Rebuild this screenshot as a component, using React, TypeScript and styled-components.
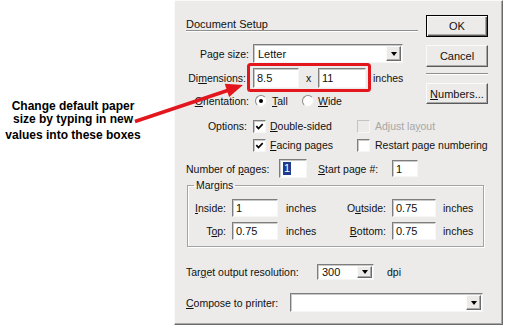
import React from "react";
import styled, { createGlobalStyle } from "styled-components";

const Global = createGlobalStyle`
  html, body { margin: 0; padding: 0; background: #fff; }
  body { font-family: "Liberation Sans", Arial, sans-serif; }
`;

const DLG = "#ecebe9";

const Page = styled.div`
  position: relative;
  width: 512px;
  height: 328px;
  display: flex;
  overflow: hidden;
  background: #fff;
`;

const Note = styled.div`
  width: 174px;
  flex-shrink: 0;
  box-sizing: border-box;
  padding: 100px 28px 0 0;
  font: bold 12px "Liberation Sans", Arial, sans-serif;
  color: #000;
  text-align: center;
`;

const NoteLine = styled.div<{ $gap?: number }>`
  line-height: 13px;
  margin-top: ${(p) => p.$gap ?? 0}px;
  white-space: nowrap;
`;

const Overlay = styled.svg`
  position: absolute;
  left: 0;
  top: 0;
  width: 512px;
  height: 328px;
  pointer-events: none;
`;

const Dialog = styled.div`
  width: 329px;
  height: 325px;
  box-sizing: border-box;
  background: ${DLG};
  border-top: 1px solid #fafafa;
  border-left: 1px solid #fafafa;
  border-right: 1px solid #6b6b6b;
  border-bottom: 1px solid #6b6b6b;
  box-shadow: inset -1px -1px 0 #a9a9a9;
  padding: 0 14px 0 11px;
  display: flex;
  flex-direction: column;
  font-size: 10.5px;
  color: #111;
  font-family: "Liberation Sans", Arial, sans-serif;
`;

const TopSection = styled.div`
  display: flex;
  justify-content: space-between;
`;

const TopLeft = styled.div`
  width: 232px;
  display: flex;
  flex-direction: column;
`;

const Header = styled.div`
  padding-top: 17px;
  line-height: 12px;
  font-size: 11px;
`;

const Groove = styled.div`
  margin-top: 0;
  height: 0;
  border-top: 1px solid #8e8e8e;
  border-bottom: 1px solid #fff;
`;

const Row = styled.div<{ $mt: number; $h: number }>`
  display: flex;
  align-items: center;
  margin-top: ${(p) => p.$mt}px;
  height: ${(p) => p.$h}px;
  white-space: nowrap;
`;

const Label = styled.span<{ $w: number; $gap?: number; $left?: boolean; $ml?: number }>`
  width: ${(p) => p.$w}px;
  margin-left: ${(p) => p.$ml ?? 0}px;
  margin-right: ${(p) => p.$gap ?? 4}px;
  text-align: ${(p) => (p.$left ? "left" : "right")};
  flex-shrink: 0;
  white-space: nowrap;
`;

const Text = styled.span<{ $ml?: number; $w?: number; $center?: boolean; $dim?: boolean }>`
  margin-left: ${(p) => p.$ml ?? 0}px;
  ${(p) => (p.$w ? `width: ${p.$w}px; flex-shrink: 0;` : "")}
  ${(p) => (p.$center ? "text-align: center;" : "")}
  color: ${(p) => (p.$dim ? "#a6a6a6" : "#111")};
  white-space: nowrap;
`;

const Field = styled.div<{ $w: number; $h?: number }>`
  box-sizing: border-box;
  width: ${(p) => p.$w}px;
  height: ${(p) => (p.$h ? `${p.$h}px` : "100%")};
  background: #fff;
  border: 1px solid;
  border-color: #7d7d7d #f6f6f6 #f6f6f6 #7d7d7d;
  box-shadow: inset 1px 1px 0 #c9c9c9;
  display: flex;
  align-items: center;
  padding-left: 3px;
  flex-shrink: 0;
  font-size: 11px;
`;

const Selected = styled.span`
  background: #1d3b8f;
  color: #fff;
  padding: 0 1px;
  line-height: 13px;
`;

const SelectBox = styled.div<{ $w: number }>`
  box-sizing: border-box;
  width: ${(p) => p.$w}px;
  height: 100%;
  background: #fff;
  border: 1px solid;
  border-color: #7d7d7d #f6f6f6 #f6f6f6 #7d7d7d;
  box-shadow: inset 1px 1px 0 #c9c9c9;
  display: flex;
  align-items: stretch;
  padding: 1px;
  flex-shrink: 0;
  font-size: 11px;
`;

const SelectValue = styled.span`
  flex: 1;
  display: flex;
  align-items: center;
  padding-left: 3px;
`;

const DropBtn = styled.span`
  width: 15px;
  box-sizing: border-box;
  background: ${DLG};
  border: 1px solid;
  border-color: #fafafa #6b6b6b #6b6b6b #fafafa;
  box-shadow: inset -1px -1px 0 #a9a9a9;
  display: flex;
  align-items: center;
  justify-content: center;
  &::before {
    content: "";
    border-left: 3.5px solid transparent;
    border-right: 3.5px solid transparent;
    border-top: 4px solid #000;
  }
`;

const Radio = styled.span<{ $on?: boolean }>`
  position: relative;
  width: 12px;
  height: 12px;
  box-sizing: border-box;
  border-radius: 50%;
  background: #fff;
  border: 1px solid;
  border-color: #8a8a8a #ededed #ededed #8a8a8a;
  flex-shrink: 0;
  &::after {
    content: "";
    display: ${(p) => (p.$on ? "block" : "none")};
    position: absolute;
    left: 3px;
    top: 3px;
    width: 4px;
    height: 4px;
    border-radius: 50%;
    background: #000;
  }
`;

const ChoiceItem = styled.span<{ $w?: number }>`
  display: flex;
  align-items: center;
  ${(p) => (p.$w ? `width: ${p.$w}px;` : "")}
  flex-shrink: 0;
`;

const Check = styled.span<{ $disabled?: boolean }>`
  width: 13px;
  height: 13px;
  box-sizing: border-box;
  flex-shrink: 0;
  background: ${(p) => (p.$disabled ? DLG : "#fff")};
  border: 1px solid;
  border-color: ${(p) =>
    p.$disabled ? "#c3c3c3 #f7f7f7 #f7f7f7 #c3c3c3" : "#7d7d7d #f6f6f6 #f6f6f6 #7d7d7d"};
  box-shadow: ${(p) => (p.$disabled ? "none" : "inset 1px 1px 0 #c9c9c9")};
  display: flex;
  align-items: center;
  justify-content: center;
`;

const ButtonCol = styled.div`
  width: 62px;
  display: flex;
  flex-direction: column;
  padding-top: 14px;
`;

const Btn = styled.div<{ $default?: boolean; $mt?: number; $h?: number }>`
  height: ${(p) => p.$h ?? 22}px;
  margin-top: ${(p) => p.$mt ?? 0}px;
  box-sizing: border-box;
  display: flex;
  align-items: center;
  justify-content: center;
  background: ${DLG};
  font-size: 11px;
  border: 1px solid;
  border-color: ${(p) => (p.$default ? "#000" : "#fafafa #5a5a5a #5a5a5a #fafafa")};
  box-shadow: ${(p) =>
    p.$default
      ? "inset 1px 1px 0 #fafafa, inset -1px -1px 0 #5a5a5a, inset -2px -2px 0 #a9a9a9"
      : "inset -1px -1px 0 #a9a9a9"};
`;

const Sep = styled.div<{ $mt: number }>`
  margin-top: ${(p) => p.$mt}px;
  height: 0;
  border-top: 1px solid #8e8e8e;
  border-bottom: 1px solid #fff;
`;

const Group = styled.fieldset`
  margin: 1px 0 0 1px;
  width: 297px;
  height: 68px;
  box-sizing: border-box;
  padding: 8px 0 0 0;
  border: 1px solid #a3a3a3;
  box-shadow: inset 1px 1px 0 #fff, 1px 1px 0 #fff;
  min-width: 0;
`;

const Legend = styled.legend`
  margin-left: 6px;
  padding: 0 2px;
  line-height: 12px;
  font-size: 10.5px;
`;

const CheckMark = () => (
  <svg width="9" height="9" viewBox="0 0 9 9">
    <path d="M1.3 4.2 L3.5 6.5 L7.7 2.2" fill="none" stroke="#000" strokeWidth="1.7" />
  </svg>
);

export default function App() {
  return (
    <>
      <Global />
      <Page>
        <Note>
          <NoteLine>Change default paper</NoteLine>
          <NoteLine>size by typing in new</NoteLine>
          <NoteLine $gap={3}>values into these boxes</NoteLine>
        </Note>
        <Dialog>
          <TopSection>
            <TopLeft>
              <Header>Document Setup</Header>
              <Groove />
              <Row $mt={12} $h={19}>
                <Label $w={63}>
                  Pa<u>g</u>e size:
                </Label>
                <SelectBox $w={150}>
                  <SelectValue>Letter</SelectValue>
                  <DropBtn />
                </SelectBox>
              </Row>
              <Row $mt={5} $h={20}>
                <Label $w={60} $gap={7}>
                  Di<u>m</u>ensions:
                </Label>
                <Field $w={46}>8.5</Field>
                <Text $w={19} $center>
                  x
                </Text>
                <Field $w={48}>11</Field>
                <Text $ml={7}>inches</Text>
              </Row>
              <Row $mt={5} $h={16}>
                <Label $w={63} $gap={6}>
                  <u>O</u>rientation:
                </Label>
                <ChoiceItem $w={47}>
                  <Radio $on />
                  <Text $ml={5}>
                    <u>T</u>all
                  </Text>
                </ChoiceItem>
                <ChoiceItem>
                  <Radio />
                  <Text $ml={4}>
                    <u>W</u>ide
                  </Text>
                </ChoiceItem>
              </Row>
            </TopLeft>
            <ButtonCol>
              <Btn $default>OK</Btn>
              <Btn $mt={8}>Cancel</Btn>
              <Sep $mt={6} />
              <Btn $mt={8} $h={21}>
                <span>
                  <u>N</u>umbers...
                </span>
              </Btn>
            </ButtonCol>
          </TopSection>

          <Row $mt={9} $h={16}>
            <Label $w={61} $gap={6}>
              Options:
            </Label>
            <ChoiceItem $w={104}>
              <Check>
                <CheckMark />
              </Check>
              <Text $ml={4}>
                <u>D</u>ouble-sided
              </Text>
            </ChoiceItem>
            <ChoiceItem>
              <Check $disabled />
              <Text $ml={5} $dim>
                Adjust la<u>y</u>out
              </Text>
            </ChoiceItem>
          </Row>
          <Row $mt={3} $h={16}>
            <Label $w={61} $gap={6} />
            <ChoiceItem $w={104}>
              <Check>
                <CheckMark />
              </Check>
              <Text $ml={4}>
                <u>F</u>acing pages
              </Text>
            </ChoiceItem>
            <ChoiceItem>
              <Check />
              <Text $ml={5}>Restart page numbering</Text>
            </ChoiceItem>
          </Row>
          <Row $mt={6} $h={19}>
            <Label $w={87} $gap={6} $left>
              Number of <u>p</u>ages:
            </Label>
            <Field $w={28}>
              <Selected>1</Selected>
            </Field>
            <Label $w={74} $gap={0} $left $ml={11}>
              <u>S</u>tart page #:
            </Label>
            <Field $w={26} $h={17}>
              1
            </Field>
          </Row>

          <Group>
            <Legend>Margins</Legend>
            <Row $mt={0} $h={18}>
              <Label $w={38} $gap={6}>
                <u>I</u>nside:
              </Label>
              <Field $w={46}>1</Field>
              <Text $ml={8} $w={50}>
                inches
              </Text>
              <Label $w={50} $gap={6}>
                O<u>u</u>tside:
              </Label>
              <Field $w={44}>0.75</Field>
              <Text $ml={7}>inches</Text>
            </Row>
            <Row $mt={5} $h={18}>
              <Label $w={38} $gap={6}>
                T<u>o</u>p:
              </Label>
              <Field $w={46}>0.75</Field>
              <Text $ml={8} $w={50}>
                inches
              </Text>
              <Label $w={50} $gap={6}>
                <u>B</u>ottom:
              </Label>
              <Field $w={44}>0.75</Field>
              <Text $ml={7}>inches</Text>
            </Row>
          </Group>

          <Row $mt={17} $h={16}>
            <Label $w={131} $gap={0} $left>
              Tar<u>g</u>et output resolution:
            </Label>
            <SelectBox $w={57}>
              <SelectValue>300</SelectValue>
              <DropBtn />
            </SelectBox>
            <Text $ml={13}>dpi</Text>
          </Row>
          <Row $mt={13} $h={19}>
            <Label $w={104} $gap={0} $left>
              <u>C</u>ompose to printer:
            </Label>
            <SelectBox $w={193}>
              <SelectValue />
              <DropBtn />
            </SelectBox>
          </Row>
        </Dialog>
        <Overlay viewBox="0 0 512 328">
          <rect x="248.5" y="64.5" width="121" height="26" rx="2" fill="none" stroke="#e3151d" strokeWidth="3" />
          <line x1="135" y1="121.5" x2="229" y2="90" stroke="#e3151d" strokeWidth="3.5" />
          <polygon points="243,85 229.1,97 224.7,83.8" fill="#e3151d" />
        </Overlay>
      </Page>
    </>
  );
}
